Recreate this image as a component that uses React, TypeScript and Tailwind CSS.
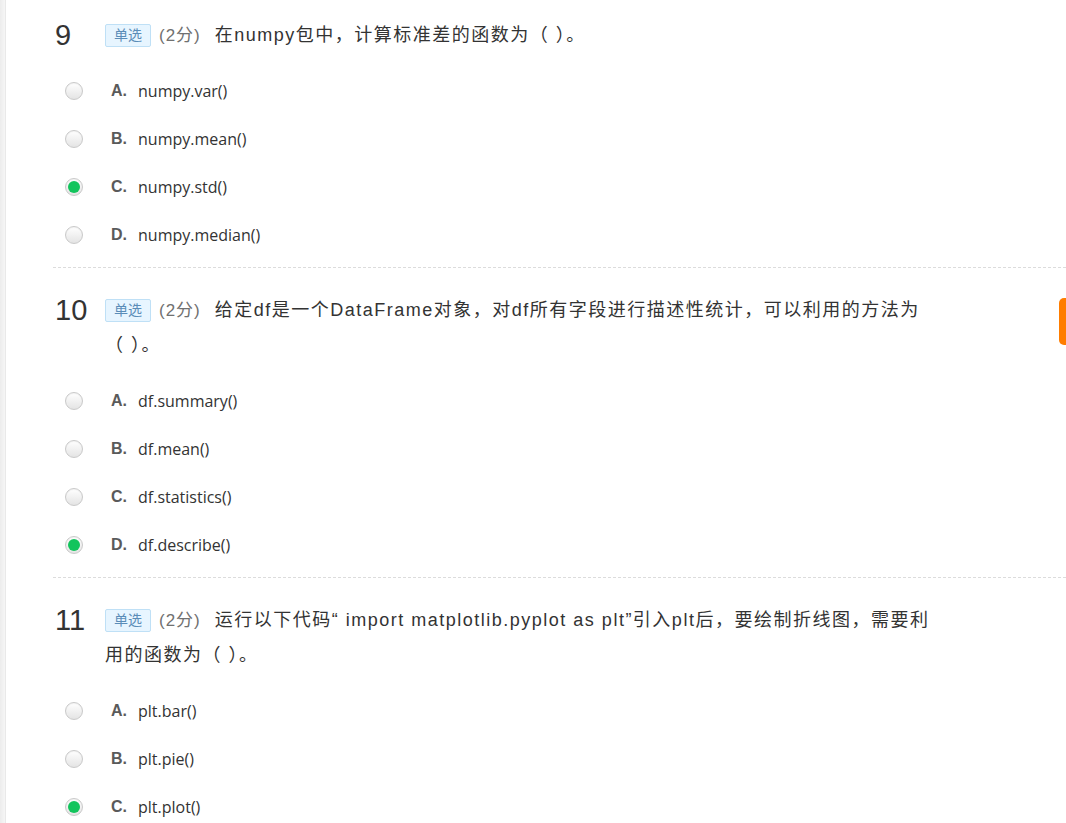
import React from "react";

type Option = { key: string; text: string };
type Question = {
  no: number;
  title: string;
  options: Option[];
  answer: string;
};

const questions: Question[] = [
  {
    no: 9,
    title: "在numpy包中，计算标准差的函数为（ ）。",
    options: [
      { key: "A", text: "numpy.var()" },
      { key: "B", text: "numpy.mean()" },
      { key: "C", text: "numpy.std()" },
      { key: "D", text: "numpy.median()" },
    ],
    answer: "C",
  },
  {
    no: 10,
    title: "给定df是一个DataFrame对象，对df所有字段进行描述性统计，可以利用的方法为（ ）。",
    options: [
      { key: "A", text: "df.summary()" },
      { key: "B", text: "df.mean()" },
      { key: "C", text: "df.statistics()" },
      { key: "D", text: "df.describe()" },
    ],
    answer: "D",
  },
  {
    no: 11,
    title: "运行以下代码“ import matplotlib.pyplot as plt”引入plt后，要绘制折线图，需要利用的函数为（ ）。",
    options: [
      { key: "A", text: "plt.bar()" },
      { key: "B", text: "plt.pie()" },
      { key: "C", text: "plt.plot()" },
    ],
    answer: "C",
  },
];

function Radio({ checked }: { checked: boolean }) {
  return (
    <span className="flex h-[18px] w-[18px] shrink-0 items-center justify-center rounded-full border border-[#c9c9c9] bg-gradient-to-b from-[#ffffff] to-[#e4e4e4] shadow-[inset_0_1px_1px_rgba(0,0,0,0.05)]">
      {checked && <span className="h-[12px] w-[12px] rounded-full bg-[#12c45c]" />}
    </span>
  );
}

function QuestionBlock({ q, first }: { q: Question; first: boolean }) {
  return (
    <div className={`border-b border-dashed border-[#dcdcdc] pb-[8px] ${first ? "pt-[18px]" : "pt-[25px]"}`}>
      <div className="flex">
        <div className="w-[52px] shrink-0 pl-[2px] text-[29px] leading-[35px] text-[#333]">{q.no}</div>
        <div className="w-[830px] text-[18px] leading-[35px] tracking-[1.5px] text-[#333] [font-family:'Liberation_Sans','Noto_Sans_CJK_SC',sans-serif]">
          <span className="mr-[8px] inline-block rounded-[2px] border border-[#bfe0f6] bg-[#e7f5ff] px-[8px] align-[1px] text-[14px] leading-[21px] tracking-normal text-[#5b8db8]">
            单选
          </span>
          <span className="mr-[14px] text-[17px] tracking-[1px] text-[#707070]">(2分)</span>
          {q.title}
        </div>
      </div>
      <div className="mt-[14px] flex flex-col">
        {q.options.map((o) => (
          <div key={o.key} className="flex h-[48px] items-center pl-[12px]">
            <Radio checked={o.key === q.answer} />
            <span className="ml-[28px] w-[27px] text-[16px] font-bold text-[#5a5a5a] [font-family:'Liberation_Sans',sans-serif]">
              {o.key}.
            </span>
            <span className="text-[16px] text-[#333] [font-family:'Open_Sans',sans-serif]">{o.text}</span>
          </div>
        ))}
      </div>
    </div>
  );
}

export default function App() {
  return (
    <div className="relative flex h-[823px] w-[1066px] overflow-hidden bg-white [font-family:'Liberation_Sans',sans-serif]">
      <div className="w-[6px] shrink-0 border-r border-[#e9e9e9] bg-gradient-to-r from-[#ececec] to-[#f6f6f6]" />
      <div className="ml-[47px] flex-1">
        {questions.map((q, i) => (
          <QuestionBlock key={q.no} q={q} first={i === 0} />
        ))}
      </div>
      <div className="absolute right-0 top-[298px] h-[47px] w-[7px] rounded-l-[5px] bg-[#ff7d00]" />
    </div>
  );
}
